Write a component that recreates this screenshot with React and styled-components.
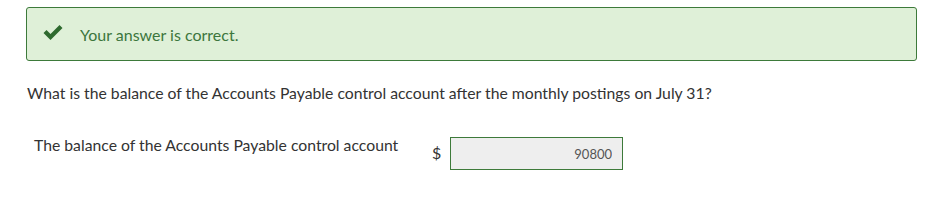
import styled, { createGlobalStyle } from "styled-components"

const GlobalStyle = createGlobalStyle`
body {
  margin: 0;
  background: #fff;
  font-family: Lato, "Open Sans", sans-serif;
  color: #333;
}
`

const Page = styled.div`
padding: 7px 15px 0 26px;
width: 932px;
box-sizing: border-box;
`
const Alert = styled.div`
display: flex;
align-items: center;
height: 54px;
box-sizing: border-box;
padding: 0 0 0 16px;
background-color: #dff0d8;
border: 1px solid #3d7a3a;
border-radius: 3px;
color: #3c763d;
font-size: 16px;
`
const Check = styled.svg`
width: 20px;
height: 16px;
margin-right: 17px;
margin-top: -3px;
`
const Question = styled.p`
margin: 22px 0 0 1px;
font-size: 15.75px;
line-height: 20px;
color: #333;
`
const Row = styled.div`
display: flex;
align-items: flex-start;
margin-top: 31px;
padding-left: 8px;
`
const Label = styled.div`
font-size: 15.75px;
line-height: 20px;
margin-top: 1px;
width: 398px;
`
const Dollar = styled.span`
font-size: 16px;
margin-top: 9px;
width: 18px;
color: #333;
`
const Input = styled.input`
width: 173px;
height: 33px;
margin-top: 3px;
box-sizing: border-box;
background: #eeeeee;
border: 1px solid #3d7a3a;
text-align: right;
padding: 0 10px;
font-family: Lato, sans-serif;
font-size: 13px;
color: #555;
`

export default function App() {
  return (
    <>
      <GlobalStyle />
      <Page>
        <Alert>
          <Check viewBox="0 0 20 16">
            <path d="M0.5 8 L7.5 15 L19.5 3 L16.5 0 L7.5 9 L3.5 5 Z" fill="#2f6a2f" />
          </Check>
          Your answer is correct.
        </Alert>
        <Question>
          What is the balance of the Accounts Payable control account after the monthly postings on July 31?
        </Question>
        <Row>
          <Label>The balance of the Accounts Payable control account</Label>
          <Dollar>$</Dollar>
          <Input readOnly value="90800" />
        </Row>
      </Page>
    </>
  )
}
